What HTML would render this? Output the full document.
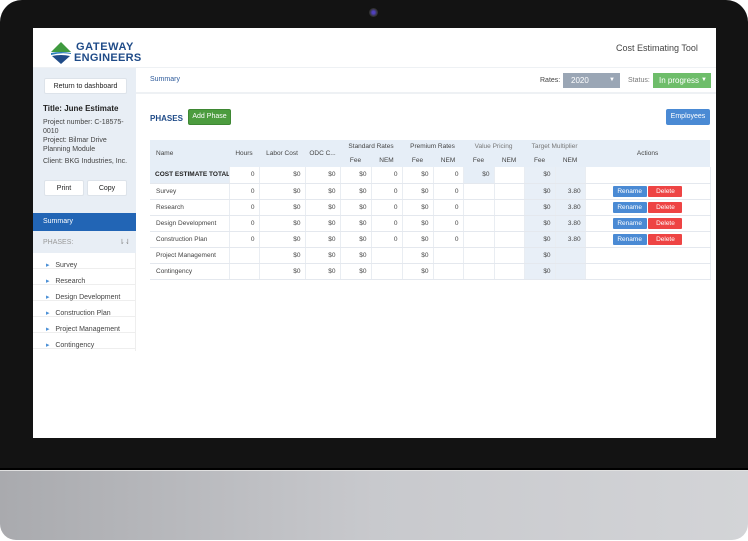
<!DOCTYPE html>
<html><head><meta charset="utf-8"><style>
*{margin:0;padding:0;box-sizing:border-box}
body{width:748px;height:541px;overflow:hidden;background:#fff;font-family:"Liberation Sans",sans-serif;position:relative}
.abs{position:absolute}
.bezel{left:0;top:0;width:748px;height:472px;background:#131313;border-radius:22px 22px 0 0}
.chin{left:0;top:470px;width:748px;height:70px;background:linear-gradient(90deg,#a9aaae,#c8c9cd 50%,#d3d4d7);border-radius:0 0 16px 16px;border-top:1px solid #e0e0e0}
.screen{left:33px;top:28px;width:683px;height:410px;background:#fff;overflow:hidden}
.t{position:absolute;white-space:nowrap;font-size:7px;color:#444}
.side{left:0;top:40px;width:103px;height:145px;background:#e8eef5}
.btn{position:absolute;background:#fff;border:1px solid #dde3ea;font-size:7px;color:#222;text-align:center;border-radius:2px}
table{position:absolute;left:117px;top:112px;width:560px;table-layout:fixed;border-collapse:collapse;font-size:6.5px;color:#444}
td{height:16px;border-bottom:1px solid #e4e8ee;border-right:1px solid #e9edf2;text-align:right;padding:0 4px;white-space:nowrap;overflow:hidden}
td.n{text-align:left;padding-left:6px}
td.a{padding:0 2px;text-align:center}
thead td{background:#e6eef7;border:none;text-align:center;color:#444;height:13.5px}
.tm{background:#e8eff7}
.rb{display:inline-block;width:34px;height:11px;line-height:11px;text-align:center;color:#fff;font-size:6.5px;border-radius:1px;vertical-align:middle}
</style></head><body>
<div class="abs bezel"></div>
<div class="abs" style="left:369px;top:8px;width:9px;height:9px;border-radius:50%;background:radial-gradient(#5040c0 20%,#333 60%,#222)"></div>
<div class="abs chin"></div>
<div class="abs" style="left:0;top:468px;width:748px;height:2px;background:#000"></div>
<div class="abs screen">
  <svg class="abs" style="left:17px;top:14px" width="22" height="22" viewBox="0 0 22 22"><path d="M11 0 L21 10 L1 10Z" fill="#3f9a3f"/><path d="M1 11 Q11 9 21 11 L21 12 Q11 10 1 13Z" fill="#2b7fb9"/><path d="M2 14 Q11 12 20 14 L11 22Z" fill="#1f4b88"/></svg>
  <div class="t" style="left:43px;top:13px;font-size:11px;font-weight:bold;color:#1f4b88;letter-spacing:0.6px">GATEWAY</div>
  <div class="t" style="left:41px;top:24px;font-size:11px;font-weight:bold;color:#1f4b88;letter-spacing:0.3px">ENGINEERS</div>
  <div class="t" style="left:583px;top:15px;font-size:9px;color:#444">Cost Estimating Tool</div>
  <div class="abs" style="left:0;top:39px;width:683px;height:1px;background:#eef1f4"></div>
  <div class="abs side"></div>
  <div class="btn" style="left:11px;top:50px;width:83px;height:16px;line-height:15px">Return to dashboard</div>
  <div class="t" style="left:10px;top:76px;font-size:8px;font-weight:bold;color:#222">Title: June Estimate</div>
  <div class="t" style="left:10px;top:90px;color:#444;line-height:9px">Project number: C-18575-<br>0010</div>
  <div class="t" style="left:10px;top:108px;color:#444;line-height:9px">Project: Bilmar Drive<br>Planning Module</div>
  <div class="t" style="left:10px;top:130px">Client: BKG Industries, Inc.</div>
  <div class="btn" style="left:11px;top:152px;width:40px;height:16px;line-height:15px">Print</div>
  <div class="btn" style="left:54px;top:152px;width:40px;height:16px;line-height:15px">Copy</div>
  <div class="abs" style="left:0;top:185px;width:103px;height:18px;background:#2265b5"></div>
  <div class="t" style="left:10px;top:190px;color:#fff">Summary</div>
  <div class="abs" style="left:0;top:203px;width:103px;height:22px;background:#e8eef5"></div>
  <div class="t" style="left:10px;top:211px;color:#999">PHASES:</div>
  <div class="t" style="left:86px;top:210px;color:#888">⇂⇃</div>
  <div class="abs" style="left:0;top:225px;width:103px;height:98px;border-right:1px solid #eee">
    <div style="height:16px;border-bottom:1px solid #eee"></div><div style="height:16px;border-bottom:1px solid #eee"></div><div style="height:16px;border-bottom:1px solid #eee"></div><div style="height:16px;border-bottom:1px solid #eee"></div><div style="height:16px;border-bottom:1px solid #eee"></div><div style="height:16px;border-bottom:1px solid #eee"></div>
  </div>
  <div class="t" style="left:13px;top:230px;line-height:16px;color:#444"><span style="color:#4a8fd6">▸</span>&nbsp;&nbsp; Survey<br><span style="color:#4a8fd6">▸</span>&nbsp;&nbsp; Research<br><span style="color:#4a8fd6">▸</span>&nbsp;&nbsp; Design Development<br><span style="color:#4a8fd6">▸</span>&nbsp;&nbsp; Construction Plan<br><span style="color:#4a8fd6">▸</span>&nbsp;&nbsp; Project Management<br><span style="color:#4a8fd6">▸</span>&nbsp;&nbsp; Contingency</div>
  <div class="t" style="left:117px;top:48px;color:#2d5a9a">Summary</div>
  <div class="abs" style="left:103px;top:64px;width:580px;height:2px;background:#eef1f4"></div>
  <div class="t" style="left:507px;top:49px">Rates:</div>
  <div class="abs" style="left:530px;top:45px;width:57px;height:15px;background:#9aa6b5;color:#fff;font-size:8px;padding:3px 0 0 8px">2020<span style="position:absolute;right:5px;top:4px;font-size:6px">▼</span></div>
  <div class="t" style="left:595px;top:49px;color:#777">Status:</div>
  <div class="abs" style="left:620px;top:45px;width:58px;height:15px;background:#6ebd6a;color:#fff;font-size:8px;padding:3px 0 0 6px">In progress<span style="position:absolute;right:4px;top:4px;font-size:6px">▼</span></div>
  <div class="t" style="left:117px;top:86px;font-size:8px;font-weight:bold;color:#1f4b88">PHASES</div>
  <div class="abs" style="left:155px;top:81px;width:43px;height:16px;background:#4c9c3e;border:1px solid #3e8733;color:#fff;font-size:7px;text-align:center;line-height:14px;border-radius:2px">Add Phase</div>
  <div class="abs" style="left:633px;top:81px;width:44px;height:16px;background:#4a8ad4;color:#fff;font-size:7px;text-align:center;line-height:16px;border-radius:2px">Employees</div>
  <table>
    <colgroup><col style="width:79px"><col style="width:30px"><col style="width:46px"><col style="width:35px"><col style="width:31px"><col style="width:31px"><col style="width:31px"><col style="width:30px"><col style="width:31px"><col style="width:30px"><col style="width:31px"><col style="width:30px"><col style="width:125px"></colgroup>
    <thead>
      <tr><td rowspan="2" style="text-align:left;padding-left:6px">Name</td><td rowspan="2">Hours</td><td rowspan="2">Labor Cost</td><td rowspan="2">ODC C...</td><td colspan="2">Standard Rates</td><td colspan="2">Premium Rates</td><td colspan="2" style="color:#777">Value Pricing</td><td colspan="2" style="color:#777">Target Multiplier</td><td rowspan="2">Actions</td></tr>
      <tr><td>Fee</td><td>NEM</td><td>Fee</td><td>NEM</td><td>Fee</td><td>NEM</td><td>Fee</td><td>NEM</td></tr>
    </thead>
    <tbody>
      <tr><td class="n" style="background:#e6eef7;font-weight:bold;color:#222;font-size:6.5px;padding-left:5px">COST ESTIMATE TOTAL</td><td>0</td><td>$0</td><td>$0</td><td>$0</td><td>0</td><td>$0</td><td>0</td><td style="background:#e6eef7">$0</td><td></td><td class="tm">$0</td><td class="tm"></td><td></td></tr>
      <tr><td class="n">Survey</td><td>0</td><td>$0</td><td>$0</td><td>$0</td><td>0</td><td>$0</td><td>0</td><td></td><td></td><td class="tm">$0</td><td class="tm">3.80</td><td class="a"><span class="rb" style="background:#4a8ad4">Rename</span> <span class="rb" style="background:#ee4444">Delete</span></td></tr>
      <tr><td class="n">Research</td><td>0</td><td>$0</td><td>$0</td><td>$0</td><td>0</td><td>$0</td><td>0</td><td></td><td></td><td class="tm">$0</td><td class="tm">3.80</td><td class="a"><span class="rb" style="background:#4a8ad4">Rename</span> <span class="rb" style="background:#ee4444">Delete</span></td></tr>
      <tr><td class="n">Design Development</td><td>0</td><td>$0</td><td>$0</td><td>$0</td><td>0</td><td>$0</td><td>0</td><td></td><td></td><td class="tm">$0</td><td class="tm">3.80</td><td class="a"><span class="rb" style="background:#4a8ad4">Rename</span> <span class="rb" style="background:#ee4444">Delete</span></td></tr>
      <tr><td class="n">Construction Plan</td><td>0</td><td>$0</td><td>$0</td><td>$0</td><td>0</td><td>$0</td><td>0</td><td></td><td></td><td class="tm">$0</td><td class="tm">3.80</td><td class="a"><span class="rb" style="background:#4a8ad4">Rename</span> <span class="rb" style="background:#ee4444">Delete</span></td></tr>
      <tr><td class="n">Project Management</td><td></td><td>$0</td><td>$0</td><td>$0</td><td></td><td>$0</td><td></td><td></td><td></td><td class="tm">$0</td><td class="tm"></td><td></td></tr>
      <tr><td class="n">Contingency</td><td></td><td>$0</td><td>$0</td><td>$0</td><td></td><td>$0</td><td></td><td></td><td></td><td class="tm">$0</td><td class="tm"></td><td></td></tr>
    </tbody>
  </table>
</div>
</body></html>
